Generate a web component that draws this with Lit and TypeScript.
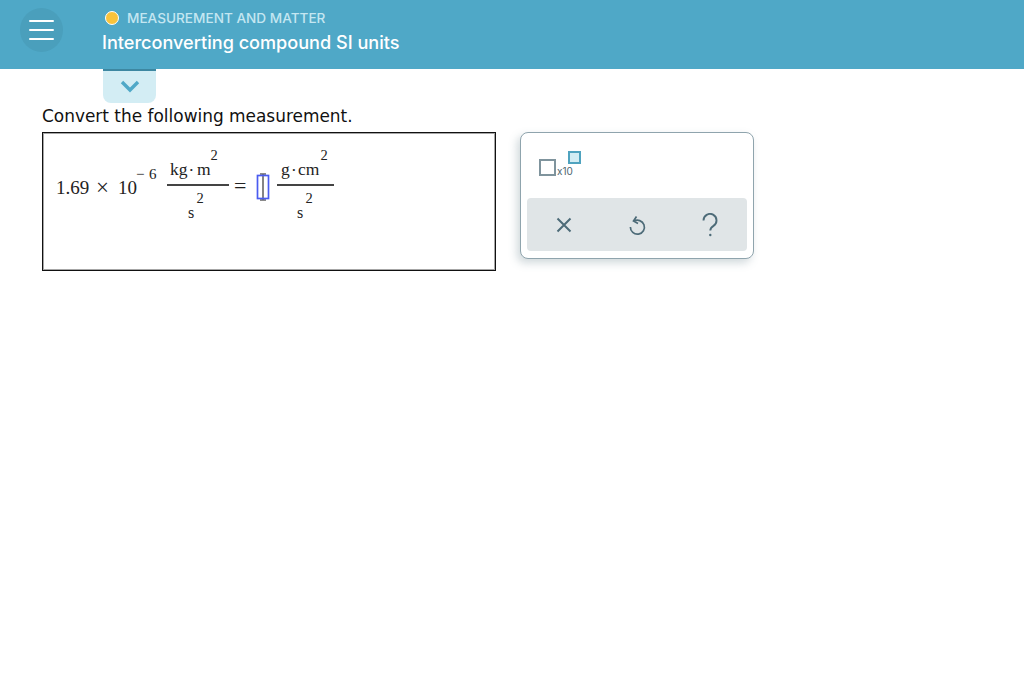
import { LitElement, html, css } from "lit";
import { customElement } from "lit/decorators.js";

const glyphs: [string, number, number, number][] = [
  ["1.69", 13, 54, 19],
  ["×", 53, 54, 23],
  ["10", 75, 54, 19],
  ["−", 93, 41, 15],
  ["6", 106, 41, 15],
  ["kg", 127, 37, 17.5],
  ["·", 145.5, 37, 17],
  ["m", 154, 37, 17.5],
  ["2", 167.5, 22, 14.5],
  ["2", 153.5, 65, 14.5],
  ["s", 145, 80, 16],
  ["=", 191, 53, 22],
  ["g", 238, 37, 17.5],
  ["·", 248, 37, 17],
  ["cm", 255, 37, 17.5],
  ["2", 277.5, 22, 14.5],
  ["2", 262.5, 65, 14.5],
  ["s", 254, 80, 16],
];

@customElement("app-root")
export class AppRoot extends LitElement {
  static styles = css`
    :host { display: block; width: 1024px; height: 684px; background: #fff; overflow: hidden; font-family: "DejaVu Sans", sans-serif; }
    .bar { height: 69px; background: #4fa8c7; display: flex; box-sizing: border-box; padding: 8px 0 0 20px; }
    .menu { width: 43px; height: 44px; border-radius: 50%; background: #4a9fbc; display: flex; flex-direction: column; justify-content: center; align-items: center; gap: 7px; }
    .menu i { display: block; width: 25px; height: 2px; background: #fff; border-radius: 1px; }
    .titles { margin-left: 39px; display: flex; flex-direction: column; }
    .topic { display: flex; align-items: center; gap: 8px; margin-left: 3px; height: 19px; color: #c4e6f1; font-size: 13.6px; font-family: Inter, sans-serif; font-weight: 500; }
    .dot { width: 14px; height: 14px; box-sizing: border-box; border-radius: 50%; background: #f8c33c; border: 1.5px solid #fff; }
    .title { margin-top: 2px; color: #fff; font-size: 18.1px; font-weight: 500; font-family: Inter, sans-serif; line-height: 26px; }
    .tab { margin-left: 103px; width: 53px; height: 34px; box-sizing: border-box; background: #d3edf4; border-top: 2px solid #3d87a1; border-radius: 0 0 8px 8px; display: flex; justify-content: center; padding-top: 9px; }
    .tab svg { display: block; }
    .prompt { margin: 1px 0 0 42px; height: 27px; font-size: 16.95px; line-height: 24px; color: #111; }
    .work { display: flex; align-items: flex-start; margin: 1px 0 0 42px; gap: 24px; }
    .math { position: relative; width: 454px; height: 139px; box-sizing: border-box; border: 1px solid #111; box-shadow: inset 0 0 0 1px rgba(0,0,0,.35); font-family: "Liberation Serif", serif; color: #222; }
    .math span { position: absolute; transform: translateY(-50%); line-height: 1; white-space: nowrap; }
    .rule { position: absolute; height: 1.5px; background: #444; top: 51px; }
    .cursor { position: absolute; left: 213px; top: 40px; }
    .panel { width: 234px; height: 127px; box-sizing: border-box; border: 1.5px solid #8fa4ad; border-radius: 8px; background: #fff; box-shadow: -3px 4px 8px rgba(90,120,130,.28); padding: 0 6px 7px; display: flex; flex-direction: column; justify-content: flex-end; }
    .sci { position: relative; flex: 1; }
    .box { position: absolute; left: 12px; top: 26px; width: 17px; height: 17px; box-sizing: border-box; border: 2px solid #7f949d; }
    .x10 { position: absolute; left: 30px; top: 32px; font: 400 10px/12px Inter, sans-serif; color: #4c6570; }
    .exp { position: absolute; left: 41px; top: 18px; width: 12.5px; height: 12.5px; box-sizing: border-box; border: 2px solid #4fa3bf; background: #d3edf4; }
    .actions { height: 53px; background: #e0e5e7; border-radius: 4px; display: grid; grid-template-columns: repeat(3, 73.3px); align-items: center; justify-items: center; }
    .actions svg { display: block; }
  `;

  render() {
    return html`
      <div class="bar">
        <div class="menu"><i></i><i></i><i></i></div>
        <div class="titles">
          <div class="topic"><b class="dot"></b>MEASUREMENT AND MATTER</div>
          <div class="title">Interconverting compound SI units</div>
        </div>
      </div>
      <div class="tab">
        <svg width="20" height="13" viewBox="0 0 20 13"><path d="M2 2l8 8 8-8" fill="none" stroke="#4fa8c7" stroke-width="3.4"/></svg>
      </div>
      <div class="prompt">Convert the following measurement.</div>
      <div class="work">
        <div class="math">
          ${glyphs.map(([t, x, y, s]) => html`<span style="left:${x}px;top:${y}px;font-size:${s}px">${t}</span>`)}
          <div class="rule" style="left:124px;width:62px"></div>
          <div class="rule" style="left:234px;width:57px"></div>
          <svg class="cursor" width="14" height="28" viewBox="0 0 14 28">
            <path d="M4 1h6M7 1v26M4 27h6" fill="none" stroke="#666" stroke-width="1.6"/>
            <rect x="1.5" y="2.5" width="11" height="23" fill="none" stroke="#4a5cf0" stroke-width="1.7"/>
          </svg>
        </div>
        <div class="panel">
          <div class="sci"><div class="box"></div><div class="x10">x10</div><div class="exp"></div></div>
          <div class="actions">
            <svg width="20" height="20" viewBox="0 0 20 20"><path d="M3.5 3.5l13 13M16.5 3.5l-13 13" fill="none" stroke="#4d6b78" stroke-width="2"/></svg>
            <svg width="20" height="22" viewBox="0 0 20 22"><path d="M6.8 7.2A7 7 0 1 1 3.4 13M9.5 2.5L6.5 7l4.5 2.6" fill="none" stroke="#4d6b78" stroke-width="1.7"/></svg>
            <svg width="18" height="24" viewBox="0 0 18 24"><path d="M2.5 7.5a6.5 6.5 0 1 1 10 5.4c-2 1.3-3.2 2.3-3.2 4.6" fill="none" stroke="#4d6b78" stroke-width="1.9"/><circle cx="9.3" cy="22" r="1.2" fill="#4d6b78"/></svg>
          </div>
        </div>
      </div>
    `;
  }
}
